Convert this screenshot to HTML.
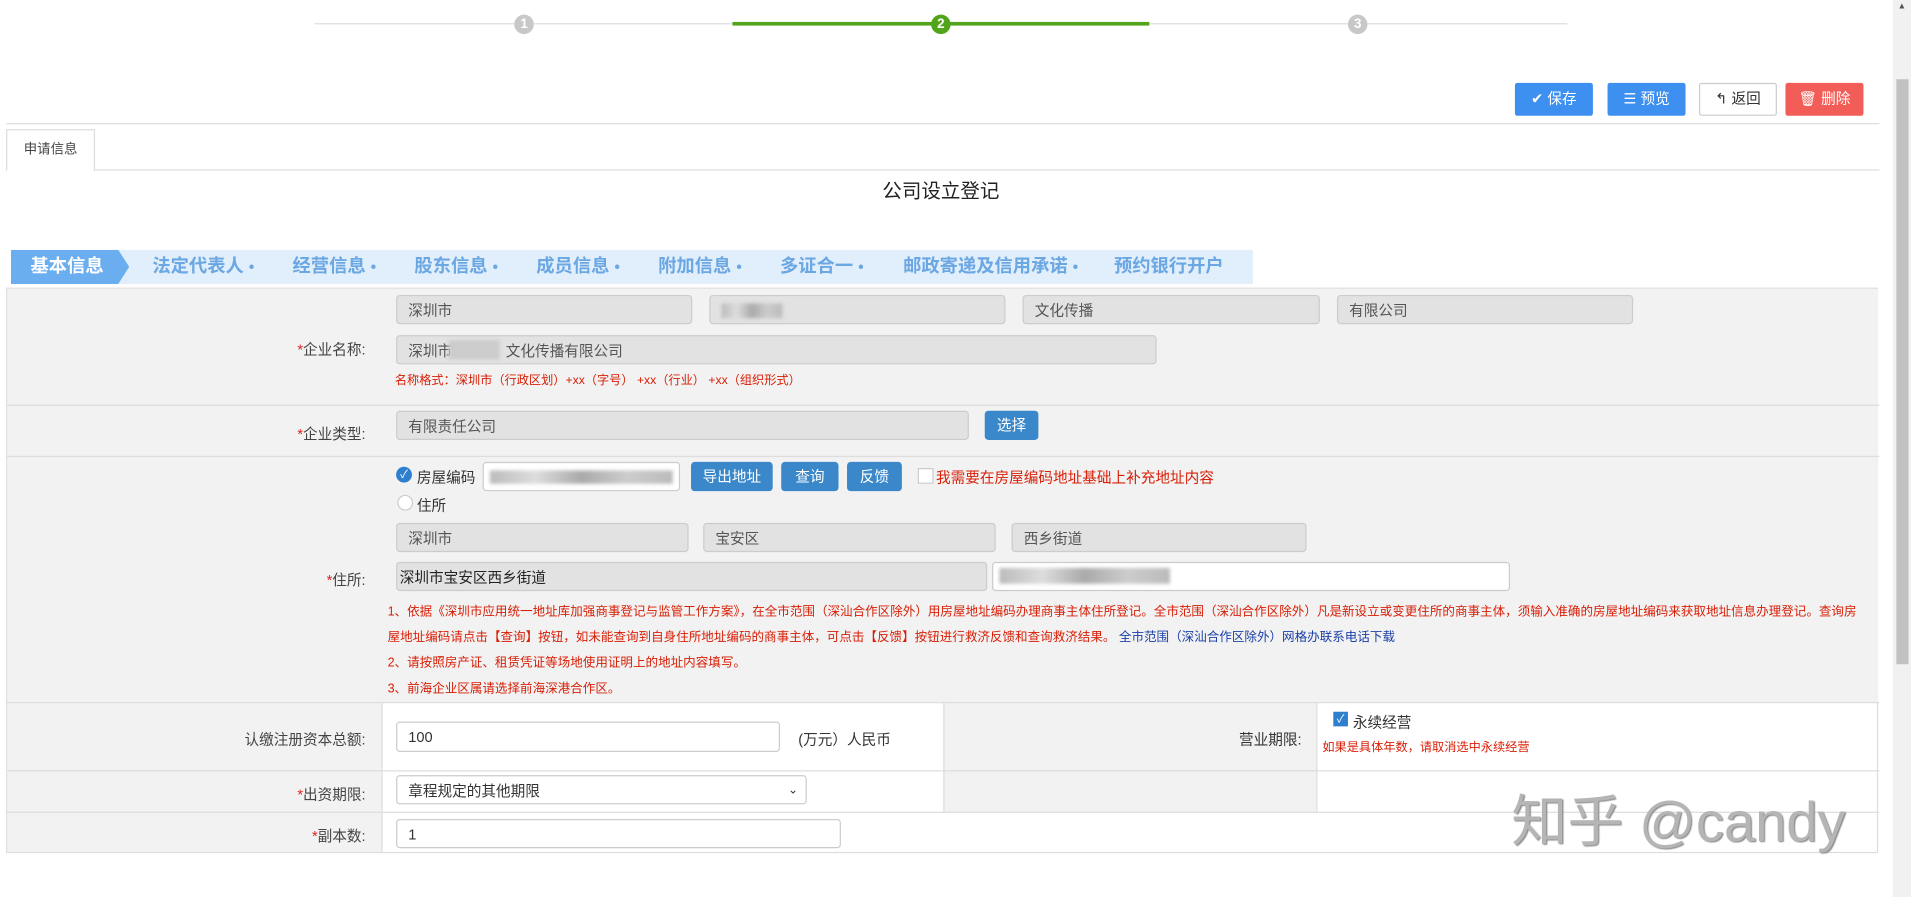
<!DOCTYPE html>
<html><head><meta charset="utf-8"><style>
html,body{margin:0;padding:0;background:#fff;overflow:hidden;width:1911px;height:897px}
#w{position:absolute;left:0;top:0;width:1568px;height:736px;transform:scale(1.21875);transform-origin:0 0;font-family:"Liberation Sans","Noto Sans CJK SC",sans-serif;font-size:12px;color:#333}
.a{position:absolute}
.c{position:absolute;width:16px;height:16px;border-radius:50%;background:#c8c8c8;color:#fff;font-size:11px;font-weight:bold;text-align:center;line-height:16px}
.btn{position:absolute;height:27px;line-height:27px;border-radius:2px;color:#fff;text-align:center;font-size:12px}
.in{position:absolute;height:24px;line-height:24px;background:#e2e2e2;border:1px solid #ccc;border-radius:3px;box-sizing:border-box;padding-left:9px;color:#555;font-size:12px}
.wi{background:#fff}
.lab{position:absolute;left:5px;width:295px;text-align:right;font-size:12px;color:#444}
.r{color:#e02020}
.bb{position:absolute;background:#3a87c9;color:#fff;border-radius:3px;height:24px;line-height:24px;text-align:center;font-size:12px}
.red{position:absolute;color:#d81e06;font-size:10.5px}
.nav span{position:absolute;top:0;line-height:28px;color:#6aa7e3;font-weight:bold;font-size:15px}
.blur{position:absolute;background:linear-gradient(90deg,#bbb,#ddd,#aaa,#ccc,#bbb);filter:blur(1.5px)}
</style></head><body><div id="w">
<div class="a" style="left:258px;top:19px;width:1028px;height:1px;background:#ddd"></div>
<div class="a" style="left:601px;top:18px;width:342px;height:3px;background:#52a41a"></div>
<div class="c" style="left:422px;top:12px">1</div>
<div class="c" style="left:764px;top:12px;background:#52a41a">2</div>
<div class="c" style="left:1106px;top:12px">3</div>
<div class="btn" style="left:1243px;top:68px;width:64px;background:#3d8ff0">✔ 保存</div>
<div class="btn" style="left:1319px;top:68px;width:64px;background:#3d8ff0">☰ 预览</div>
<div class="btn" style="left:1394px;top:68px;width:62px;background:#fff;border:1px solid #ccc;color:#333;height:25px;line-height:25px">↰ 返回</div>
<div class="btn" style="left:1465px;top:68px;width:64px;background:#f25e57">🗑 删除</div>
<div class="a" style="left:5px;top:101px;width:1537px;height:1px;background:#ddd"></div>
<div class="a" style="left:5px;top:106px;width:71px;height:33px;border:1px solid #ddd;border-bottom:none;background:#fff;line-height:33px;text-align:center;font-size:11px;color:#444">申请信息</div>
<div class="a" style="left:77px;top:139px;width:1465px;height:1px;background:#ddd"></div>
<div class="a" style="left:672px;top:143px;width:200px;text-align:center;font-size:16px;color:#222">公司设立登记</div>
<div class="a nav" style="left:9px;top:205px;width:1019px;height:28px;background:#e1eefb">
<div class="a" style="left:0;top:0;width:97px;height:28px;background:#6aaef0;clip-path:polygon(0 0,88px 0,97px 14px,88px 28px,0 28px)"></div>
<span style="left:16px;color:#fff">基本信息</span>
<span style="left:116px">法定代表人 <small>•</small></span>
<span style="left:231px">经营信息 <small>•</small></span>
<span style="left:331px">股东信息 <small>•</small></span>
<span style="left:431px">成员信息 <small>•</small></span>
<span style="left:531px">附加信息 <small>•</small></span>
<span style="left:631px">多证合一 <small>•</small></span>
<span style="left:732px">邮政寄递及信用承诺 <small>•</small></span>
<span style="left:905px">预约银行开户</span>
</div>
<div class="a" style="left:5px;top:236px;width:1536px;height:464px;border:1px solid #ddd;box-sizing:border-box"></div>
<div class="a" style="left:6px;top:237px;width:307px;height:462px;background:#f2f2f2"></div>
<div class="a" style="left:313px;top:237px;width:1228px;height:339px;background:#f2f2f2"></div>
<div class="a" style="left:774px;top:576px;width:306px;height:90px;background:#f2f2f2"></div>
<div class="a" style="left:313px;top:576px;width:1px;height:124px;background:#ddd"></div>
<div class="a" style="left:774px;top:576px;width:1px;height:90px;background:#ddd"></div>
<div class="a" style="left:1080px;top:576px;width:1px;height:90px;background:#ddd"></div>
<div class="a" style="left:5px;top:332px;width:1537px;height:1px;background:#ddd"></div>
<div class="a" style="left:5px;top:374px;width:1537px;height:1px;background:#ddd"></div>
<div class="a" style="left:5px;top:576px;width:1537px;height:1px;background:#ddd"></div>
<div class="a" style="left:5px;top:632px;width:1537px;height:1px;background:#ddd"></div>
<div class="a" style="left:5px;top:666px;width:1537px;height:1px;background:#ddd"></div>
<div class="lab" style="top:278px"><span class="r">*</span>企业名称:</div>
<div class="in" style="left:325px;top:242px;width:243px">深圳市</div>
<div class="in" style="left:582px;top:242px;width:243px"></div>
<div class="blur" style="left:592px;top:249px;width:50px;height:12px"></div>
<div class="in" style="left:839px;top:242px;width:244px">文化传播</div>
<div class="in" style="left:1097px;top:242px;width:243px">有限公司</div>
<div class="in" style="left:325px;top:275px;width:624px">深圳市<span style="display:inline-block;width:44px"></span>文化传播有限公司</div>
<div class="blur" style="left:368px;top:279px;width:42px;height:16px;background:#ccc"></div>
<div class="red" style="left:324px;top:303px;font-size:10px">名称格式：深圳市（行政区划）+xx（字号） +xx（行业） +xx（组织形式）</div>
<div class="lab" style="top:347px"><span class="r">*</span>企业类型:</div>
<div class="in" style="left:325px;top:337px;width:470px">有限责任公司</div>
<div class="bb" style="left:808px;top:337px;width:44px">选择</div>
<div class="a" style="left:325px;top:383px;width:13px;height:13px;border-radius:50%;background:#2f7fcf;color:#fff;font-size:9px;text-align:center;line-height:13px">✓</div>
<div class="a" style="left:342px;top:383px;font-size:12px">房屋编码</div>
<div class="in wi" style="left:396px;top:379px;width:162px"></div>
<div class="blur" style="left:402px;top:386px;width:150px;height:11px"></div>
<div class="bb" style="left:567px;top:379px;width:67px">导出地址</div>
<div class="bb" style="left:641px;top:379px;width:47px">查询</div>
<div class="bb" style="left:695px;top:379px;width:45px">反馈</div>
<div class="a" style="left:753px;top:384px;width:11px;height:11px;border:1px solid #ccc;background:#fff"></div>
<div class="a r" style="left:768px;top:383px;font-size:12px;color:#d81e06">我需要在房屋编码地址基础上补充地址内容</div>
<div class="a" style="left:326px;top:406px;width:11px;height:11px;border-radius:50%;border:1px solid #ccc;background:#fff"></div>
<div class="a" style="left:342px;top:406px">住所</div>
<div class="in" style="left:325px;top:429px;width:240px">深圳市</div>
<div class="in" style="left:577px;top:429px;width:240px">宝安区</div>
<div class="in" style="left:830px;top:429px;width:242px">西乡街道</div>
<div class="lab" style="top:467px"><span class="r">*</span>住所:</div>
<div class="in" style="left:325px;top:461px;width:485px;color:#222;padding-left:2px">深圳市宝安区西乡街道</div>
<div class="in wi" style="left:814px;top:461px;width:425px"></div>
<div class="blur" style="left:820px;top:466px;width:140px;height:13px"></div>
<div class="red" style="left:318px;top:492px;line-height:21px;font-size:10.3px;white-space:nowrap">1、依据《深圳市应用统一地址库加强商事登记与监管工作方案》，在全市范围（深汕合作区除外）用房屋地址编码办理商事主体住所登记。全市范围（深汕合作区除外）凡是新设立或变更住所的商事主体，须输入准确的房屋地址编码来获取地址信息办理登记。查询房<br>屋地址编码请点击【查询】按钮，如未能查询到自身住所地址编码的商事主体，可点击【反馈】按钮进行救济反馈和查询救济结果。 <span style="color:#1a3fa8">全市范围（深汕合作区除外）网格办联系电话下载</span><br>2、请按照房产证、租赁凭证等场地使用证明上的地址内容填写。<br>3、前海企业区属请选择前海深港合作区。</div>
<div class="lab" style="top:598px">认缴注册资本总额:</div>
<div class="in wi" style="left:325px;top:592px;width:315px;height:25px;color:#333">100</div>
<div class="a" style="left:655px;top:598px">(万元）人民币</div>
<div class="a" style="left:960px;top:598px;width:108px;text-align:right">营业期限:</div>
<div class="a" style="left:1094px;top:584px;width:12px;height:12px;background:#2f7fcf;color:#fff;font-size:9px;line-height:12px;text-align:center">✓</div>
<div class="a" style="left:1110px;top:584px">永续经营</div>
<div class="red" style="left:1085px;top:604px;font-size:10px">如果是具体年数，请取消选中永续经营</div>
<div class="lab" style="top:643px"><span class="r">*</span>出资期限:</div>
<div class="in wi" style="left:325px;top:636px;width:337px;color:#333">章程规定的其他期限<span style="position:absolute;right:6px;font-size:10px">⌄</span></div>
<div class="lab" style="top:677px"><span class="r">*</span>副本数:</div>
<div class="in wi" style="left:325px;top:672px;width:365px;height:24px;color:#333">1</div>
<div class="a" style="left:1240px;top:638px;font-size:46px;color:#b5b5b5;text-shadow:1px 1px 1px #888;font-family:'Liberation Sans','Noto Sans CJK SC',sans-serif">知乎 @candy</div>
<div class="a" style="left:1553px;top:0;width:15px;height:736px;background:#f1f1f1"></div>
<div class="a" style="left:1556px;top:65px;width:10px;height:480px;background:#c1c1c1"></div>
<div class="a" style="left:1557px;top:2px;font-size:7px;color:#555">▲</div>
</div></body></html>
